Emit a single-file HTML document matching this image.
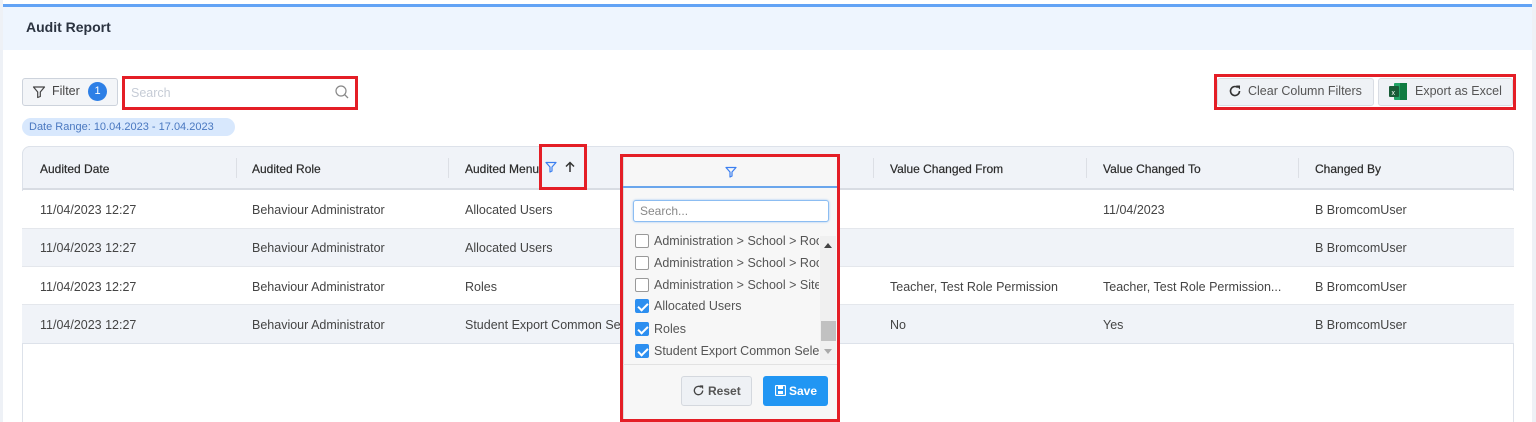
<!DOCTYPE html>
<html><head><style>
*{box-sizing:border-box;margin:0;padding:0}
html,body{width:1536px;height:422px;overflow:hidden}
body{background:#fff;font-family:"Liberation Sans",sans-serif;position:relative;color:#333}
.abs{position:absolute}
.red{position:absolute;border:3px solid #e41e26}
.hd{position:absolute;top:146px;height:44px;left:22px;width:1492px;background:#f0f3f8;border:1px solid #dde2ea;border-bottom:2px solid #d8dce3;border-radius:8px 8px 0 0}
.th{position:absolute;top:162px;font-size:12px;color:#2b2b2b;-webkit-text-stroke:0.2px #2b2b2b}
.sep{position:absolute;top:158px;width:1px;height:20px;background:#dcdfe5}
.row{position:absolute;left:22px;width:1492px;height:38px;border-bottom:1px solid #e4e7ec}
.td{position:absolute;font-size:12.5px;color:#444}
.it{position:absolute;left:635px;font-size:12.5px;color:#555;white-space:nowrap;width:184px;overflow:hidden}
.cb{display:inline-block;width:14px;height:14px;border:1px solid #999;border-radius:2px;vertical-align:-3px;margin-right:5px;background:#fff}
.cb.on{background:#2d8ff0;border-color:#2d8ff0;position:relative}
.cb.on:after{content:"";position:absolute;left:4px;top:1px;width:4px;height:8px;border:solid #fff;border-width:0 2px 2px 0;transform:rotate(45deg)}
</style></head><body>
<div class="abs" style="left:0;top:0;width:3px;height:422px;background:#eef1f6"></div>
<div class="abs" style="right:0;top:0;width:4px;height:422px;background:#eef1f6"></div>
<div class="abs" style="left:3px;top:4px;width:1529px;height:3px;background:#62a3f5"></div>
<div class="abs" style="left:3px;top:7px;width:1529px;height:43px;background:#eef5fe"></div>
<div class="abs" style="left:26px;top:19px;font-size:14px;font-weight:bold;color:#2b3340">Audit Report</div>

<div class="abs" style="left:22px;top:78px;width:96px;height:28px;border:1px solid #cdd3dc;border-radius:3px;background:#f3f5f8"></div>
<svg class="abs" style="left:32px;top:85px" width="14" height="14" viewBox="0 0 14 14"><path d="M1.5 2h11L8.3 7v4.5L5.7 12.5V7z" fill="none" stroke="#444" stroke-width="1.2" stroke-linejoin="round"/></svg>
<div class="abs" style="left:52px;top:84px;font-size:12.5px;color:#444">Filter</div>
<div class="abs" style="left:88px;top:82px;width:19px;height:19px;border-radius:50%;background:#2d7fe6;color:#fff;font-size:11px;text-align:center;line-height:19px">1</div>
<div class="red" style="left:122px;top:76px;width:236px;height:34px"></div>
<div class="abs" style="left:131px;top:86px;font-size:12.5px;color:#c6ccd6">Search</div>
<svg class="abs" style="left:334px;top:84px" width="16" height="16" viewBox="0 0 16 16"><circle cx="7" cy="7" r="5" fill="none" stroke="#888" stroke-width="1.2"/><path d="M10.6 10.6L14 14" stroke="#888" stroke-width="1.3"/></svg>
<div class="abs" style="left:22px;top:118px;width:213px;height:18px;border-radius:9px;background:#d8e8fd;color:#4a78c0;font-size:11px;line-height:18px;padding-left:7px">Date Range: 10.04.2023 - 17.04.2023</div>

<div class="red" style="left:1214px;top:74px;width:302px;height:36px"></div>
<div class="abs" style="left:1217px;top:78px;width:157px;height:28px;border:1px solid #d9dde4;border-radius:3px;background:#eff2f6"></div>
<div class="abs" style="left:1378px;top:78px;width:135px;height:28px;border:1px solid #d9dde4;border-radius:3px;background:#eff2f6"></div>
<svg class="abs" style="left:1228px;top:84px" width="14" height="14" viewBox="0 0 14 14"><path d="M11.5 7A4.5 4.5 0 1 1 9.8 3.5" fill="none" stroke="#333" stroke-width="1.6"/><path d="M8 1.5h4v4z" fill="#333"/></svg>
<div class="abs" style="left:1248px;top:84px;font-size:12.5px;color:#555">Clear Column Filters</div>
<svg class="abs" style="left:1389px;top:83px" width="18" height="17" viewBox="0 0 18 17"><rect x="5" y="0" width="13" height="17" rx="1" fill="#21a366"/><rect x="11" y="0" width="7" height="17" fill="#107c41"/><rect x="0" y="3" width="10" height="11" rx="1" fill="#185c37"/><text x="2.5" y="12" font-size="7" fill="#fff" font-family="Liberation Sans">x</text></svg>
<div class="abs" style="left:1415px;top:84px;font-size:12.5px;color:#555">Export as Excel</div>

<div class="abs" style="left:22px;top:146px;width:1492px;height:276px;border:1px solid #dde2ea;border-bottom:none;border-radius:8px 8px 0 0"></div>
<div class="hd"></div>
<div class="th" style="left:40px">Audited Date</div>
<div class="sep" style="left:236px"></div>
<div class="th" style="left:252px">Audited Role</div>
<div class="sep" style="left:448px"></div>
<div class="th" style="left:465px">Audited Menu</div>
<svg class="abs" style="left:545px;top:161px" width="12" height="12" viewBox="0 0 12 12"><path d="M1 1.5h10L7 6v4L5 11V6z" fill="none" stroke="#3b7ff0" stroke-width="1.2" stroke-linejoin="round"/></svg>
<svg class="abs" style="left:564px;top:161px" width="12" height="12" viewBox="0 0 12 12"><path d="M6 11V2M2 5.5L6 1.5l4 4" fill="none" stroke="#333" stroke-width="1.5"/></svg>
<div class="red" style="left:539px;top:144px;width:48px;height:46px"></div>
<div class="sep" style="left:873px"></div>
<div class="th" style="left:890px">Value Changed From</div>
<div class="sep" style="left:1086px"></div>
<div class="th" style="left:1103px">Value Changed To</div>
<div class="sep" style="left:1298px"></div>
<div class="th" style="left:1315px">Changed By</div>

<div class="row" style="top:191px;background:#fff"></div>
<div class="row" style="top:229px;background:#f0f3f8"></div>
<div class="row" style="top:267px;background:#fff"></div>
<div class="row" style="top:305px;background:#f0f3f8;height:39px;border-bottom:1px solid #dde2ea"></div>

<div class="td" style="left:40px;top:203px">11/04/2023 12:27</div>
<div class="td" style="left:252px;top:203px">Behaviour Administrator</div>
<div class="td" style="left:465px;top:203px">Allocated Users</div>
<div class="td" style="left:1103px;top:203px">11/04/2023</div>
<div class="td" style="left:1315px;top:203px">B BromcomUser</div>
<div class="td" style="left:40px;top:241px">11/04/2023 12:27</div>
<div class="td" style="left:252px;top:241px">Behaviour Administrator</div>
<div class="td" style="left:465px;top:241px">Allocated Users</div>
<div class="td" style="left:1315px;top:241px">B BromcomUser</div>
<div class="td" style="left:40px;top:280px">11/04/2023 12:27</div>
<div class="td" style="left:252px;top:280px">Behaviour Administrator</div>
<div class="td" style="left:465px;top:280px">Roles</div>
<div class="td" style="left:890px;top:280px">Teacher, Test Role Permission</div>
<div class="td" style="left:1103px;top:280px">Teacher, Test Role Permission...</div>
<div class="td" style="left:1315px;top:280px">B BromcomUser</div>
<div class="td" style="left:40px;top:318px">11/04/2023 12:27</div>
<div class="td" style="left:252px;top:318px">Behaviour Administrator</div>
<div class="td" style="left:465px;top:318px;width:160px;overflow:hidden;white-space:nowrap">Student Export Common Selection</div>
<div class="td" style="left:890px;top:318px">No</div>
<div class="td" style="left:1103px;top:318px">Yes</div>
<div class="td" style="left:1315px;top:318px">B BromcomUser</div>

<!-- popup -->
<div class="abs" style="left:623px;top:156px;width:216px;height:264px;background:#f7f7f7;border:1px solid #ddd"></div>
<div class="abs" style="left:623px;top:186px;width:216px;height:2px;background:#6aa6ec"></div>
<svg class="abs" style="left:725px;top:166px" width="12" height="12" viewBox="0 0 12 12"><path d="M1 1.5h10L7 6v4L5 11V6z" fill="none" stroke="#3b7ff0" stroke-width="1.2" stroke-linejoin="round"/></svg>
<div class="abs" style="left:633px;top:200px;width:196px;height:22px;border:1px solid #8cbdf2;border-radius:3px;background:#fff;box-shadow:0 0 2px #9cc6f5"></div>
<div class="abs" style="left:640px;top:204px;font-size:12px;color:#888">Search...</div>
<div class="it" style="top:234px"><span class="cb"></span>Administration &gt; School &gt; Rooms</div>
<div class="it" style="top:256px"><span class="cb"></span>Administration &gt; School &gt; Rooms</div>
<div class="it" style="top:278px"><span class="cb"></span>Administration &gt; School &gt; Sites</div>
<div class="it" style="top:299px"><span class="cb on"></span>Allocated Users</div>
<div class="it" style="top:322px"><span class="cb on"></span>Roles</div>
<div class="it" style="top:344px"><span class="cb on"></span>Student Export Common Selection</div>
<div class="abs" style="left:820px;top:236px;width:16px;height:124px;background:#f0f0f0"></div>
<div class="abs" style="left:821px;top:321px;width:15px;height:20px;background:#c1c1c1"></div>
<div class="abs" style="left:824px;top:243px;border:4px solid transparent;border-bottom:5px solid #444;border-top:0"></div>
<div class="abs" style="left:824px;top:349px;border:4px solid transparent;border-top:5px solid #aaa;border-bottom:0"></div>
<div class="abs" style="left:623px;top:364px;width:216px;height:1px;background:#e2e2e2"></div>
<div class="abs" style="left:681px;top:376px;width:71px;height:30px;border:1px solid #d4d8de;border-radius:3px;background:#eef1f5"></div>
<svg class="abs" style="left:692px;top:384px" width="13" height="13" viewBox="0 0 14 14"><path d="M11.5 7A4.5 4.5 0 1 1 9.8 3.5" fill="none" stroke="#444" stroke-width="1.4"/><path d="M8 1.5h4v4z" fill="#444"/></svg>
<div class="abs" style="left:708px;top:384px;font-size:12px;font-weight:bold;color:#555">Reset</div>
<div class="abs" style="left:763px;top:376px;width:65px;height:30px;border-radius:3px;background:#2196f3"></div>
<svg class="abs" style="left:775px;top:385px" width="11" height="11" viewBox="0 0 11 11"><rect x="0.5" y="0.5" width="10" height="10" rx="1" fill="none" stroke="#fff" stroke-width="1.2"/><rect x="3" y="1" width="5" height="3" fill="#fff"/><rect x="3" y="6" width="5" height="3" fill="#fff"/></svg>
<div class="abs" style="left:789px;top:384px;font-size:12px;font-weight:bold;color:#fff">Save</div>
<div class="red" style="left:620px;top:154px;width:220px;height:268px"></div>
</body></html>
